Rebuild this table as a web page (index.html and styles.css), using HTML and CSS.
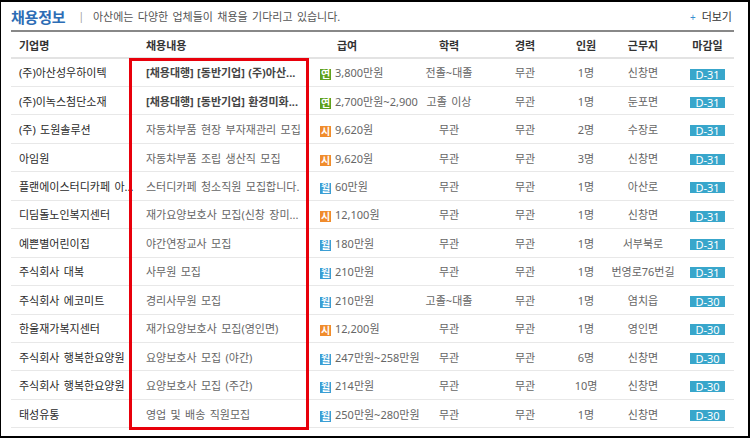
FILE: index.html
```html
<!DOCTYPE html>
<html lang="ko">
<head>
<meta charset="utf-8">
<title>채용정보</title>
<link rel="stylesheet" href="styles.css">
</head>
<body>
<div class="frame">
  <div class="panel">
    <div class="head">
      <h2 class="title">채용정보</h2>
      <span class="sep">|</span>
      <span class="desc">아산에는 다양한 업체들이 채용을 기다리고 있습니다.</span>
      <a class="more" href="#"><span class="plus">+</span>더보기</a>
    </div>
    <div class="table-wrap">
      <table class="jobs">
        <colgroup>
          <col class="c1"><col class="c2"><col class="c3"><col class="c4"><col class="c5"><col class="c6"><col class="c7"><col class="c8">
        </colgroup>
        <thead>
          <tr>
            <th class="co">기업명</th><th class="job">채용내용</th><th class="pay">급여</th><th>학력</th><th>경력</th><th>인원</th><th>근무지</th><th>마감일</th>
          </tr>
        </thead>
        <tbody>
          <tr><td class="co">(주)아산성우하이텍</td><td class="job strong">[채용대행] [동반기업] (주)아산...</td><td class="pay"><span class="tag y">연</span>3,800만원</td><td>전졸~대졸</td><td>무관</td><td>1명</td><td>신창면</td><td><span class="dday">D-31</span></td></tr>
          <tr><td class="co">(주)이녹스첨단소재</td><td class="job strong">[채용대행] [동반기업] 환경미화...</td><td class="pay"><span class="tag y">연</span>2,700만원~2,900</td><td>고졸 이상</td><td>무관</td><td>1명</td><td>둔포면</td><td><span class="dday">D-31</span></td></tr>
          <tr><td class="co">(주) 도원솔루션</td><td class="job">자동차부품 현장 부자재관리 모집</td><td class="pay"><span class="tag h">시</span>9,620원</td><td>무관</td><td>무관</td><td>2명</td><td>수장로</td><td><span class="dday">D-31</span></td></tr>
          <tr><td class="co">아임원</td><td class="job">자동차부품 조립 생산직 모집</td><td class="pay"><span class="tag h">시</span>9,620원</td><td>무관</td><td>무관</td><td>3명</td><td>신창면</td><td><span class="dday">D-31</span></td></tr>
          <tr><td class="co">플랜에이스터디카페 아...</td><td class="job">스터디카페 청소직원 모집합니다.</td><td class="pay"><span class="tag m">월</span>60만원</td><td>무관</td><td>무관</td><td>1명</td><td>아산로</td><td><span class="dday">D-31</span></td></tr>
          <tr><td class="co">디딤돌노인복지센터</td><td class="job">재가요양보호사 모집(신창 장미...</td><td class="pay"><span class="tag h">시</span>12,100원</td><td>무관</td><td>무관</td><td>1명</td><td>신창면</td><td><span class="dday">D-31</span></td></tr>
          <tr><td class="co">예쁜별어린이집</td><td class="job">야간연장교사 모집</td><td class="pay"><span class="tag m">월</span>180만원</td><td>무관</td><td>무관</td><td>1명</td><td>서부북로</td><td><span class="dday">D-31</span></td></tr>
          <tr><td class="co">주식회사 대복</td><td class="job">사무원 모집</td><td class="pay"><span class="tag m">월</span>210만원</td><td>무관</td><td>무관</td><td>1명</td><td>번영로76번길</td><td><span class="dday">D-31</span></td></tr>
          <tr><td class="co">주식회사 에코미트</td><td class="job">경리사무원 모집</td><td class="pay"><span class="tag m">월</span>210만원</td><td>고졸~대졸</td><td>무관</td><td>1명</td><td>염치읍</td><td><span class="dday">D-30</span></td></tr>
          <tr><td class="co">한울재가복지센터</td><td class="job">재가요양보호사 모집(영인면)</td><td class="pay"><span class="tag h">시</span>12,200원</td><td>무관</td><td>무관</td><td>1명</td><td>영인면</td><td><span class="dday">D-30</span></td></tr>
          <tr><td class="co">주식회사 행복한요양원</td><td class="job">요양보호사 모집 (야간)</td><td class="pay"><span class="tag m">월</span>247만원~258만원</td><td>무관</td><td>무관</td><td>6명</td><td>신창면</td><td><span class="dday">D-30</span></td></tr>
          <tr><td class="co">주식회사 행복한요양원</td><td class="job">요양보호사 모집 (주간)</td><td class="pay"><span class="tag m">월</span>214만원</td><td>무관</td><td>무관</td><td>10명</td><td>신창면</td><td><span class="dday">D-30</span></td></tr>
          <tr><td class="co">태성유통</td><td class="job">영업 및 배송 직원모집</td><td class="pay"><span class="tag m">월</span>250만원~280만원</td><td>무관</td><td>무관</td><td>1명</td><td>신창면</td><td><span class="dday">D-30</span></td></tr>
        </tbody>
      </table>
      <div class="highlight"></div>
    </div>
  </div>
</div>
</body>
</html>
```
FILE: styles.css
```css
* { box-sizing: border-box; }
html, body { margin: 0; padding: 0; background: #fff; }
body {
  font-family: "Noto Sans", "Noto Sans CJK KR", sans-serif;
  font-size: 11px;
  color: #666;
  word-spacing: 1.5px;
}
.frame {
  width: 750px;
  height: 438px;
  border: 2px solid #000;
  border-left-width: 1px;
  overflow: hidden;
}
.panel {
  padding: 0 14px 0 10px;
}
.head {
  display: flex;
  align-items: center;
  height: 30px;
  border-bottom: 2px solid #888;
}
.title {
  margin: 0;
  font-size: 15px;
  font-weight: bold;
  color: #2d6db5;
  letter-spacing: -0.2px;
}
.sep {
  margin: 0 9px 0 13px;
  color: #999;
  font-size: 10px;
}
.desc {
  color: #555;
  font-size: 11px;
}
.more {
  margin-left: auto;
  color: #333;
  text-decoration: none;
  font-size: 11px;
  padding-right: 2px;
}
.plus { color: #3a8fd0; margin-right: 6px; font-size: 10px; }
.table-wrap { position: relative; }
.jobs {
  width: 723px;
  table-layout: fixed;
  border-collapse: collapse;
}
.c1 { width: 124px; }
.c2 { width: 175px; }
.c3 { width: 105px; }
.c4 { width: 68px; }
.c5 { width: 84px; }
.c6 { width: 38px; }
.c7 { width: 76px; }
.c8 { width: 53px; }
.jobs th {
  height: 26px;
  font-weight: bold;
  color: #333;
  text-align: center;
  border-bottom: 2px solid #e3e3e3;
  padding: 0;
}
.jobs td {
  height: 28.46px;
  border-bottom: 1px solid #e8e8e8;
  text-align: center;
  white-space: nowrap;
  padding: 0;
}
.jobs .co { text-align: left; padding-left: 8px; overflow: hidden; }
.jobs td.co { color: #2a2a2a; }
.jobs .job { text-align: left; padding-left: 11px; overflow: hidden; }
.jobs .strong { color: #444; font-weight: bold; word-spacing: 0.5px; }
.jobs th.pay { text-align: left; padding-left: 27px; }
.jobs td.pay { text-align: left; padding-left: 10px; overflow: visible; }
.tag {
  display: inline-block;
  width: 11px;
  height: 11px;
  line-height: 11px;
  font-size: 10px;
  font-weight: bold;
  color: #fff;
  text-align: center;
  margin-right: 4px;
  vertical-align: -1px;
}
.tag.y { background: #5fa11d; }
.tag.h { background: #f08c2c; }
.tag.m { background: #3b9ed4; }
.dday {
  display: inline-block;
  width: 35px;
  height: 11px;
  line-height: 11px;
  background: #38a6cb;
  color: #fff;
  font-size: 11px;
  vertical-align: middle;
}
.highlight {
  position: absolute;
  left: 118px;
  top: 26px;
  width: 180px;
  height: 372px;
  border: 3px solid #e8000b;
  pointer-events: none;
}
```
